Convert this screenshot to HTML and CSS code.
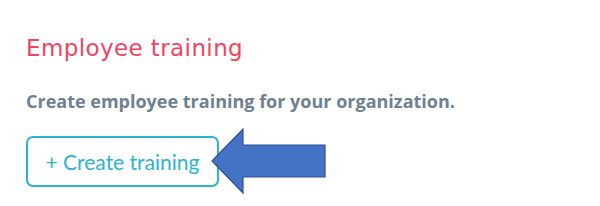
FILE: index.html
```html
<!DOCTYPE html>
<html>
<head>
<meta charset="utf-8">
<link rel="stylesheet" href="styles.css">
</head>
<body>
<section class="panel">
  <h2 class="title">Employee training</h2>
  <p class="desc">Create employee training for your organization.</p>
  <div class="actions">
    <button class="btn">+ Create training</button>
    <svg class="arrow" width="118" height="68" viewBox="0 0 118 68">
      <path d="M1 33 L32 1 L32 17 L114 17 L114 49 L32 49 L32 65 Z" fill="#4472c4" stroke="#2f528f" stroke-width="1.2" stroke-linejoin="miter"/>
    </svg>
  </div>
</section>
</body>
</html>
```
FILE: styles.css
```css
html, body {
  margin: 0;
  padding: 0;
  background: #ffffff;
}
.panel {
  width: 600px;
  height: 206px;
  box-sizing: border-box;
  padding: 33px 0 0 26px;
}
.title {
  margin: 0;
  font-family: "DejaVu Sans", "Open Sans", sans-serif;
  font-weight: 400;
  font-size: 23px;
  line-height: 30px;
  color: #f2445f;
  letter-spacing: 0.4px;
}
.desc {
  margin: 27px 0 0 0;
  font-family: "Open Sans", "Noto Sans", sans-serif;
  font-weight: 700;
  font-size: 18px;
  line-height: 22px;
  color: #6f8091;
}
.actions {
  position: relative;
  margin-top: 24px;
}
.btn {
  display: block;
  width: 193px;
  height: 51px;
  box-sizing: border-box;
  border: 2px solid #2bb4cf;
  border-radius: 7px;
  background: #fff;
  color: #2bb4cf;
  font-family: Lato, "Open Sans", sans-serif;
  font-size: 21px;
  padding: 0;
  text-align: center;
}
.arrow {
  position: absolute;
  left: 185px;
  top: -8px;
}
```
